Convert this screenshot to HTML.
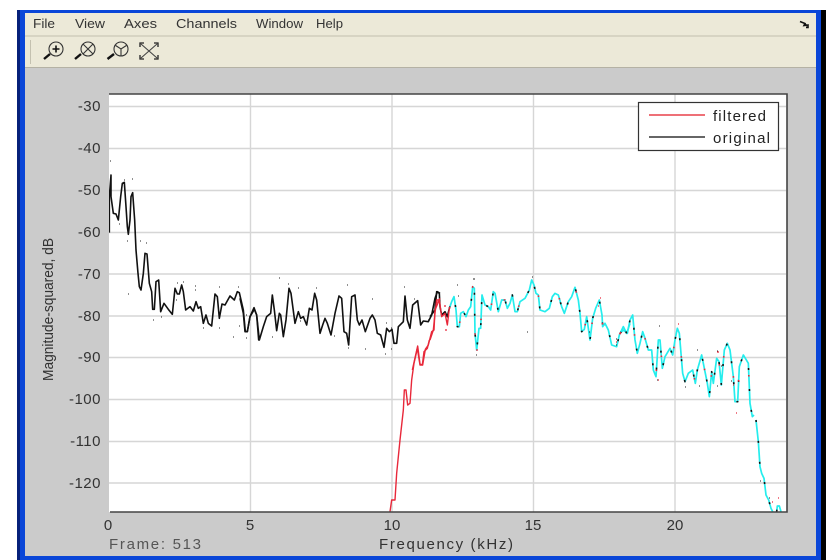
<!DOCTYPE html>
<html><head><meta charset="utf-8"><style>
html,body{margin:0;padding:0;background:#fff}
svg{display:block;filter:blur(.3px)}
text{font-family:"Liberation Sans",Arial,sans-serif}
.l{vector-effect:non-scaling-stroke;fill:none;stroke-linejoin:round}
</style></head><body>
<svg width="837" height="560" viewBox="0 0 837 560" xmlns="http://www.w3.org/2000/svg">
<defs>
<path id="k3" class="l" d="M28 248L28 140L33 75L33 140L40 190L48 192L55 210L62 140L67 100L73 97L78 170L82 230L85 253L90 210L93 140L98 128L104 210L108 300L114 370L118 410L123 420L130 370L135 310L141 312L148 400L155 425L158 478L163 478L168 395L176 390L182 485L192 460L205 478L217 493L225 415L232 432L238 432L245 405L250 425L257 480L270 470L280 483L288 455L295 475L302 470L310 520L318 495L325 520L335 528L345 432L352 440L358 505L366 462L375 465L390 438L403 450L412 425L418 428L430 480L436 545L442 545L450 500L463 478L470 495L476 570L478 570"/>
<path id="k4" class="l" d="M0 115L10 160L15 215L22 215L30 170L42 143L50 165L58 240L70 200L80 170L92 160L97 105L103 150L110 212L118 160L122 165L130 230L138 180L147 85L153 100L165 190L175 155L182 175L190 170L200 195L208 145L216 150L224 100L230 120L240 220L248 195L255 175L262 190L273 225L285 160L297 108L305 115L312 215L320 220L326 255L335 110L345 105L352 180L358 195L366 180L376 215L390 175L397 165L405 180L412 220L422 225L432 262L440 205L448 215L456 208L462 250L470 250L475 200L490 185L495 108L502 180L510 205L518 135L533 122L542 195L550 183L565 185L575 165L585 115L592 95L600 100"/>
<path id="k5" class="l" d="M0 170L15 150L20 95L28 100L30 140L35 165L45 155L52 170L58 145"/>
<path id="r9" class="l" d="M60 515L65 480L75 480L80 400L90 300L100 210L103 150L108 150L113 195L120 190L125 120L132 70L142 25L150 75L157 75L162 35L172 25L178 0"/>
<path id="r4" class="l" d="M517 330L533 258L540 312L548 315L556 268L565 255L575 215L582 210L585 150L600 115"/>
<path id="r5" class="l" d="M0 240L10 210L15 160L20 120L28 120L35 170L45 160L52 195L58 145"/>
<path id="c5" class="l" d="M58 145L65 125L72 110L78 150L82 200L88 200L92 160L100 155L108 170L115 150L122 140L128 80L133 85L135 220L140 270L147 205L152 205L156 105L165 135L175 140L182 150L190 95L195 100L205 155L215 120L225 120L232 145L240 130L247 105L255 155L262 155L270 125L285 115L298 90L305 60L312 75L318 100L325 105L330 150L345 155L358 145L367 110L375 100L385 105L395 140L403 160L415 125L425 110L435 82L445 120L450 160L455 215L463 208L470 170L480 240L488 175L497 145L508 120L516 165L518 200L525 190L535 210L545 255L560 260L568 225L580 200L590 220L600 190"/>
<path id="c6" class="l" d="M0 100L10 90L22 100L30 60L38 45L45 120L52 160L60 130L68 95L75 115L85 150L95 150L100 210L108 230L115 120L120 120L127 205L135 170L150 145L158 165L165 120L172 85L178 100L188 220L195 245L205 220L218 210L226 250L232 210L245 165L255 215L262 250L268 290L275 215L280 250L290 175L297 185L304 255L313 150L322 130L330 150L340 230L345 305L353 305L358 200L370 165L385 190L390 310L397 350L402 345"/>
<path id="c7" class="l" d="M168 0L175 65L180 140L185 160L192 175L198 225L206 240L213 265L218 275M230 275L232 258L238 258L243 275"/>
<clipPath id="pc"><rect x="109" y="94" width="678" height="418"/></clipPath>
</defs>

<!-- window -->
<rect x="17" y="10" width="809" height="550" fill="#0a46d8"/>
<rect x="17" y="10" width="3" height="550" fill="#06207a"/>
<rect x="821" y="10" width="5" height="550" fill="#000"/>
<rect x="25" y="13" width="791" height="543" fill="#cbcbcb"/>
<rect x="25" y="13" width="791" height="55" fill="#ece9d8"/>
<rect x="25" y="35.5" width="791" height="1" fill="#c2bfae"/>
<rect x="25" y="67" width="791" height="1" fill="#b5b2a4"/>
<rect x="30" y="40" width="1" height="24" fill="#c4c1b0"/>

<!-- menu -->
<g font-size="13" fill="#333">
<text x="33" y="28" textLength="22" lengthAdjust="spacingAndGlyphs">File</text>
<text x="75" y="28" textLength="30" lengthAdjust="spacingAndGlyphs">View</text>
<text x="124" y="28" textLength="33" lengthAdjust="spacingAndGlyphs">Axes</text>
<text x="176" y="28" textLength="61" lengthAdjust="spacingAndGlyphs">Channels</text>
<text x="256" y="28" textLength="47" lengthAdjust="spacingAndGlyphs">Window</text>
<text x="316" y="28" textLength="27" lengthAdjust="spacingAndGlyphs">Help</text>
</g>
<path d="M800 21.5L805 23.5L804 25.5L808 25L808 27.5L806 27.5M804 23l3 3" fill="none" stroke="#111" stroke-width="1.6"/>

<!-- toolbar icons -->
<g fill="none" stroke="#333" stroke-width="1.1">
<circle cx="56" cy="49" r="7"/>
<path d="M52.500 49h7M56 45.500v7" stroke="#111" stroke-width="1.6"/>
<path d="M50 54L44 59" stroke="#111" stroke-width="2.4"/>
<circle cx="88" cy="49" r="7"/>
<path d="M83 44L93 54M93 44L83 54"/>
<path d="M81 54L75 59" stroke="#111" stroke-width="2.4"/>
<circle cx="121" cy="49" r="7"/>
<path d="M115.600 45.500L121 49L126.400 45.500M121 49V56"/>
<path d="M114 54L107.500 59" stroke="#111" stroke-width="2.4"/>
<path d="M141 44L157 58M157 44L141 58" stroke="#444"/>
<path d="M140 47V43H144M154 43H158V47M140 55V59H144M154 59H158V55" stroke="#222" stroke-width="1.3"/>
</g>

<!-- plot -->
<rect x="109" y="94" width="678" height="418" fill="#fff"/>
<g stroke="#d6d6d6" stroke-width="1.4">
<path d="M109 106.500H786M109 148.500H786M109 190.500H786M109 232.500H786M109 274H786M109 316H786M109 357.500H786M109 399.500H786M109 441.500H786M109 483H786"/>
<path d="M250.500 94V512M392 94V512M533.500 94V512M675 94V512"/>
</g>

<g clip-path="url(#pc)">
<g stroke="#111" stroke-width="1.6">
<use href="#k3" transform="translate(100 150) scale(.33333)"/>
<use href="#k4" transform="translate(240 260) scale(.33333)"/>
<use href="#k5" transform="translate(430 260) scale(.33333)"/>
</g>
<g stroke="#e8283a" stroke-width="1.4">
<use href="#r9" transform="translate(370 340) scale(.33333)"/>
<use href="#r4" transform="translate(240 260) scale(.33333)"/>
<use href="#r5" transform="translate(430 260) scale(.33333)"/>
</g>
<g stroke="#25eded" stroke-width="1.7">
<use href="#c5" transform="translate(430 260) scale(.33333)"/>
<use href="#c6" transform="translate(620 300) scale(.33333)"/>
<use href="#c7" transform="translate(700 420) scale(.33333)"/>
</g>
<g stroke="#111" stroke-width="1.6" stroke-dasharray="2 19">
<use href="#c5" transform="translate(430 260) scale(.33333)"/>
<use href="#c6" transform="translate(620 300) scale(.33333)"/>
<use href="#c7" transform="translate(700 420) scale(.33333)"/>
</g>
<g stroke="#e8283a" stroke-width="1.6" stroke-dasharray="1.500 47">
<use href="#c5" transform="translate(430 260) scale(.33333)"/>
<use href="#c6" transform="translate(620 300) scale(.33333)"/>
</g>
<!-- scatter dots -->
<path d="M110 161h1M124 180h1M132 179h1M146 243h1M140 241h1M127 241h1M119 224h1M128 294h1M153 320h1M161 317h1M177 283h1M183 282h1M176 300h1M195 286h1M195 290h1M203 328h1M219 328h1M219 287h1M238 287h1M246 338h1M239 326h1M233 337h1M259 339h1M246 315h1M279 278h1M288 284h1M272 337h1M298 288h1M316 288h1M334 336h1M348 348h1M365 349h1M385 354h1M386 323h1M372 299h1M404 287h1M428 320h1M391 349h1M414 299h1M391 328h1M347 285h1M300 321h1" stroke="#222" stroke-width="1" fill="none"/>
<path d="M473 279h2M476 355h1M477 344h1M457 285h1M458 296h1M532 277h1M527 332h1M589 332h1M616 345h1M616 339h1M659 326h1M657 380h1M678 324h1M685 387h1M717 386h1M731 381h1M736 413h1M717 351h1M769 498h1M699 386h1M721 366h1M697 350h1M760 481h1" stroke="#222" stroke-width="1" fill="none"/>
<path d="M445 330h2M476 350h2M600 298h1M598 306h1M616 342h1M678 324h1M658 380h1M717 352h2M736 413h1M733 385h1M778 498h1M772 502h1M437 302h2M444 306h2" stroke="#e8283a" stroke-width="1.2" fill="none"/>
</g>

<path d="M109 94H787V512H110" fill="none" stroke="#444" stroke-width="1.6"/>

<!-- legend -->
<rect x="638.500" y="102.500" width="140" height="48" fill="#fff" stroke="#333" stroke-width="1.2"/>
<path d="M649 115H705" stroke="#e8404a" stroke-width="1.5"/>
<path d="M649 137H705" stroke="#333" stroke-width="1.5"/>
<g font-size="15" fill="#222">
<text x="713" y="121" textLength="53" lengthAdjust="spacing">filtered</text>
<text x="713" y="143" textLength="57" lengthAdjust="spacing">original</text>
</g>

<!-- axis labels -->
<g font-size="15" fill="#333" text-anchor="end">
<text x="101" y="111" letter-spacing=".5">-30</text>
<text x="101" y="153" letter-spacing=".5">-40</text>
<text x="101" y="195" letter-spacing=".5">-50</text>
<text x="101" y="237" letter-spacing=".5">-60</text>
<text x="101" y="279" letter-spacing=".5">-70</text>
<text x="101" y="321" letter-spacing=".5">-80</text>
<text x="101" y="362" letter-spacing=".5">-90</text>
<text x="101" y="404" letter-spacing=".5">-100</text>
<text x="101" y="446" letter-spacing=".5">-110</text>
<text x="101" y="488" letter-spacing=".5">-120</text>
</g>
<g font-size="15" fill="#333" text-anchor="middle">
<text x="108" y="530">0</text>
<text x="250" y="530">5</text>
<text x="392" y="530">10</text>
<text x="533" y="530">15</text>
<text x="675" y="530">20</text>
</g>
<text x="109" y="549" font-size="15" fill="#555" textLength="92" lengthAdjust="spacing">Frame: 513</text>
<text x="379" y="549" font-size="15" fill="#333" textLength="134" lengthAdjust="spacing">Frequency (kHz)</text>
<text transform="translate(53 381) rotate(-90)" font-size="15" fill="#333" textLength="143" lengthAdjust="spacingAndGlyphs">Magnitude-squared, dB</text>
</svg>
</body></html>
